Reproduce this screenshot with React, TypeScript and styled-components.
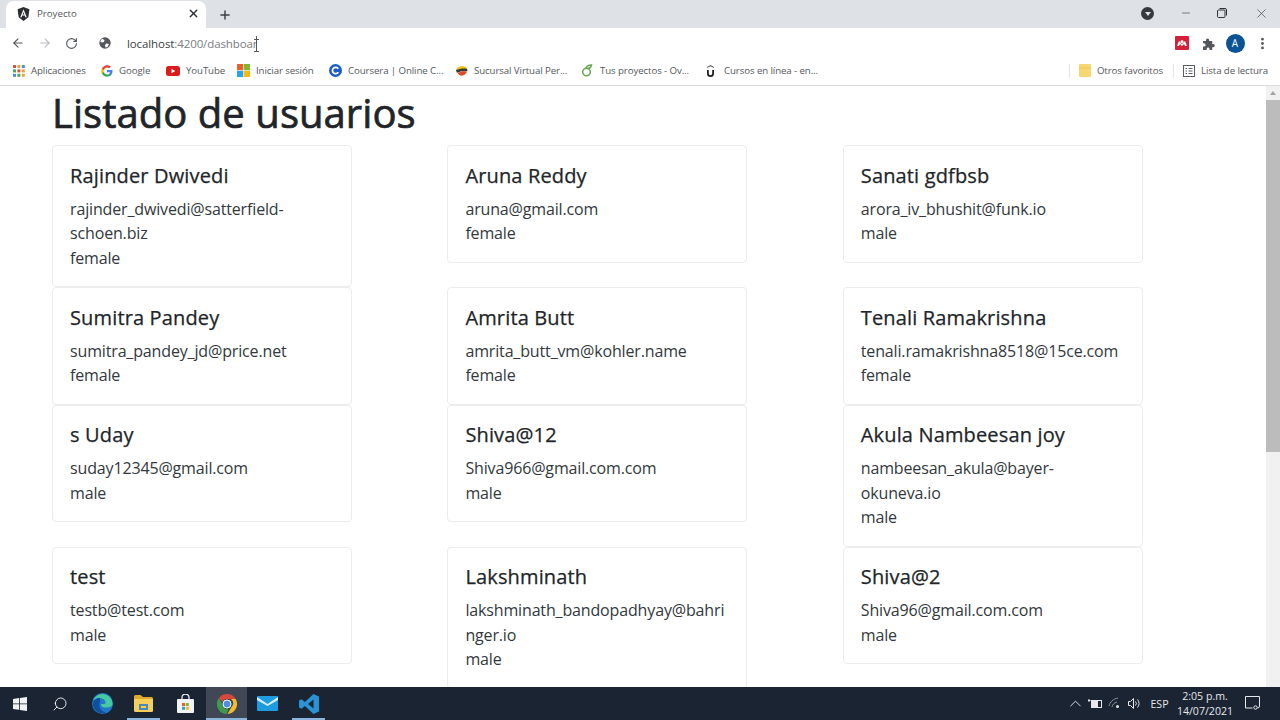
import React from "react";
import styled, { createGlobalStyle } from "styled-components";
import { ArrowLeft, ArrowRight, RotateCw, Plus, X, Minus, MoreVertical, ChevronUp, Search } from "lucide-react";

const Global = createGlobalStyle`
  html, body { margin: 0; padding: 0; height: 100%; background: #fff; }
  #root { height: 100%; }
  * { box-sizing: border-box; }
`;

const Shell = styled.div`
  width: 1280px; height: 720px; display: flex; flex-direction: column; overflow: hidden;
  font-family: "Open Sans", "Noto Sans", sans-serif; color: #212529; background: #fff;
`;
const TabStrip = styled.div`
  height: 28px; flex: none; background: #dee1e6; display: flex; align-items: flex-end; padding-left: 6px;
`;
const Tab = styled.div`
  width: 200px; height: 27px; background: #fff; border-radius: 8px 8px 0 0; display: flex; align-items: center;
  padding: 0 6px 2px 11px; font-size: 9.7px; color: #55585c;
`;
const TabTitle = styled.span` margin-left: 7px; flex: 1; `;
const NewTab = styled.div` margin: 0 0 6px 12px; display: flex; color: #3c4043; `;
const Spacer = styled.div` flex: 1; `;
const WindowControls = styled.div`
  display: flex; align-items: center; align-self: stretch; color: #2f3235; padding: 0 11px 2px 0;
`;
const ProfileDot = styled.div`
  width: 13px; height: 13px; border-radius: 50%; background: #36393d; margin-right: 24px; display: flex; align-items: center; justify-content: center;
  &::after { content: ""; border-left: 3.5px solid transparent; border-right: 3.5px solid transparent; border-top: 4.5px solid #dee1e6; margin-top: 1px; }
`;
const WinBtn = styled.div<{ $gap?: number }>` width: 16px; display: flex; justify-content: center; margin-right: ${p => p.$gap ?? 0}px; `;
const Toolbar = styled.div`
  height: 32px; flex: none; background: #fff; display: flex; align-items: center; padding: 0 5px 2px 11px; color: #5f6368;
`;
const NavIcon = styled.div<{ $w: number; $faded?: boolean }>` width: ${p => p.$w}px; display: flex; color: ${p => p.$faded ? "#b9bcc0" : "#54575b"}; `;
const Url = styled.div`
  font-size: 11.5px; color: #7a7d80; position: relative; margin-left: 12px; letter-spacing: -0.1px; flex: 1;
  b { font-weight: 400; color: #3d4043; }
`;
const Caret = styled.span`
  position: absolute; left: 129px; top: 0; width: 1px; height: 16px; background: #55585c;
  &::after { content: ""; position: absolute; left: -2px; top: 3px; width: 5px; height: 11px; border: 1px solid #55585c; border-width: 1px 0; }
`;
const ExtIcons = styled.div` display: flex; align-items: center; gap: 0; `;
const Ext = styled.div<{ $w: number }>` width: ${p => p.$w}px; display: flex; justify-content: center; align-items: center; `;
const Mendeley = styled.div`
  width: 14px; height: 14px; background: #d6203a; border-radius: 1px; display: flex; align-items: center; justify-content: center;
`;
const Avatar = styled.div`
  width: 19px; height: 19px; border-radius: 50%; background: #0b5394; color: #fff; font-size: 10px; display: flex; align-items: center; justify-content: center;
`;
const Bookmarks = styled.div`
  height: 26px; flex: none; background: #fff; border-bottom: 1px solid #dadce0; display: flex; align-items: center; padding: 0 12px 4px 13px;
  font-size: 9.7px; color: #55585c; letter-spacing: -0.1px;
`;
const Mark = styled.div<{ $w?: number }>`
  ${p => p.$w ? `width: ${p.$w}px;` : ""} display: flex; align-items: center; gap: 6px; white-space: nowrap; flex: none;
`;
const MarkSep = styled.div` width: 1px; height: 14px; background: #e3e5e8; margin: 0 9px 0 10px; `;
const Page = styled.div` flex: 1; min-height: 0; display: flex; overflow: hidden; `;
const Content = styled.main` flex: 1; min-width: 0; padding-left: 52px; overflow: hidden; `;
const Scrollbar = styled.div`
  width: 14px; flex: none; background: #f1f1f1; display: flex; flex-direction: column; align-items: center; padding-top: 5px;
  &::before { content: ""; border-left: 3.5px solid transparent; border-right: 3.5px solid transparent; border-bottom: 4px solid #a3a3a3; margin-bottom: 5px; }
`;
const Thumb = styled.div` width: 100%; height: 352px; background: #bcbcbc; `;
const Title = styled.h1`
  margin: 0 0 6px; height: 53px; font-size: 40px; line-height: 53px; font-weight: 400; letter-spacing: 0.05px; color: #212529;
  -webkit-text-stroke: 0.7px #212529;
`;
const Grid = styled.div`
  display: grid; grid-template-columns: repeat(3, 395.4px); align-items: start;
`;
const Card = styled.article`
  width: 300px; border: 1px solid #ebeced; border-radius: 4px; padding: 15.5px 16px 16px 17px; background: #fff;
`;
const Name = styled.h5`
  margin: 0 0 7px; font-size: 20px; line-height: 28px; font-weight: 400; color: #212529; letter-spacing: 0.15px;
  -webkit-text-stroke: 0.25px #212529;
`;
const Line = styled.div`
  font-size: 16px; line-height: 24.5px; color: #33383c; overflow-wrap: anywhere; letter-spacing: -0.15px;
`;
const Taskbar = styled.footer`
  height: 33px; flex: none; background: #1a2433; display: flex; align-items: stretch; color: #fff;
`;
const TaskIcon = styled.div<{ $w: number; $active?: boolean; $open?: boolean }>`
  width: ${p => p.$w}px; display: flex; align-items: center; justify-content: center; position: relative;
  background: ${p => p.$active ? "#3f4854" : "transparent"};
  ${p => p.$open ? `&::after { content: ""; position: absolute; left: ${p.$active ? 0 : 4}px; right: ${p.$active ? 0 : 4}px; bottom: 0; height: 2px; background: #8ab4dc; }` : ""}
`;
const Tray = styled.div` margin-left: auto; display: flex; align-items: center; color: #e6e8eb; font-size: 10.6px; `;
const TrayItem = styled.div<{ $w: number }>` width: ${p => p.$w}px; display: flex; align-items: center; justify-content: center; `;
const Clock = styled.div` width: 60px; text-align: center; font-size: 10.6px; line-height: 15px; `;

type U = { n: string; e: string; g: string };
const users: U[] = [
  { n: "Rajinder Dwivedi", e: "rajinder_dwivedi@satterfield-schoen.biz", g: "female" },
  { n: "Aruna Reddy", e: "aruna@gmail.com", g: "female" },
  { n: "Sanati gdfbsb", e: "arora_iv_bhushit@funk.io", g: "male" },
  { n: "Sumitra Pandey", e: "sumitra_pandey_jd@price.net", g: "female" },
  { n: "Amrita Butt", e: "amrita_butt_vm@kohler.name", g: "female" },
  { n: "Tenali Ramakrishna", e: "tenali.ramakrishna8518@15ce.com", g: "female" },
  { n: "s Uday", e: "suday12345@gmail.com", g: "male" },
  { n: "Shiva@12", e: "Shiva966@gmail.com.com", g: "male" },
  { n: "Akula Nambeesan joy", e: "nambeesan_akula@bayer-okuneva.io", g: "male" },
  { n: "test", e: "testb@test.com", g: "male" },
  { n: "Lakshminath", e: "lakshminath_bandopadhyay@bahringer.io", g: "male" },
  { n: "Shiva@2", e: "Shiva96@gmail.com.com", g: "male" },
];

const Angular = () => (
  <svg width="13" height="14" viewBox="0 0 24 26">
    <path d="M12 0 1 4l2 15 9 7 9-7 2-15z" fill="#2b2d30" />
    <path d="M12 4 6 19h2.5l1.2-3h4.6l1.2 3H18zm-1.5 10L12 9.5l1.5 4.5z" fill="#fff" />
  </svg>
);
const Apps = () => (
  <svg width="12" height="12" viewBox="0 0 12 12">
    {[0, 1, 2].flatMap(r => [0, 1, 2].map(c => (
      <rect key={`${r}${c}`} x={c * 4.4} y={r * 4.4} width="3" height="3" fill={["#d9503f", "#e8a33a", "#4d8fe0", "#4aa564", "#d9503f", "#e8a33a", "#4d8fe0", "#4aa564", "#e8a33a"][r * 3 + c]} />
    )))}
  </svg>
);
const GoogleG = () => (
  <svg width="12" height="12" viewBox="0 0 24 24">
    <path d="M23 12.3c0-.8-.1-1.600-.2-2.300H12v4.400h6.200c-.3 1.400-1.100 2.600-2.300 3.400v2.800h3.700c2.200-2 3.400-5 3.400-8.300z" fill="#4285f4" />
    <path d="M12 23.500c3.100 0 5.700-1 7.600-2.800l-3.700-2.900c-1 .7-2.300 1.100-3.900 1.100-3 0-5.500-2-6.400-4.700H1.800v2.900c1.900 3.800 5.800 6.400 10.200 6.400z" fill="#34a853" />
    <path d="M5.600 14.200c-.5-1.400-.5-3 0-4.400V6.900H1.800c-1.600 3.100-1.600 7 0 10.200z" fill="#fbbc05" />
    <path d="M12 5c1.700 0 3.200.6 4.400 1.700l3.300-3.300C17.700 1.600 15 .5 12 .5 7.600.5 3.700 3.100 1.800 6.900l3.800 2.900C6.500 7 9 5 12 5z" fill="#ea4335" />
  </svg>
);
const YouTube = () => (
  <svg width="14" height="10" viewBox="0 0 14 10">
    <rect width="14" height="10" rx="2.500" fill="#dc1b1b" />
    <path d="M5.500 2.800v4.400L9.300 5z" fill="#fff" />
  </svg>
);
const Microsoft = () => (
  <svg width="13" height="13" viewBox="0 0 13 13">
    <rect width="6.200" height="6.200" fill="#e8612c" />
    <rect x="6.800" width="6.200" height="6.200" fill="#7fba2a" />
    <rect y="6.800" width="6.200" height="6.200" fill="#27a4e8" />
    <rect x="6.800" y="6.800" width="6.200" height="6.200" fill="#fbb80f" />
  </svg>
);
const Coursera = () => (
  <svg width="13" height="13" viewBox="0 0 13 13">
    <circle cx="6.500" cy="6.500" r="6.500" fill="#1c5cc4" />
    <path d="M9.300 8.300a3.200 3.200 0 1 1 0-3.600" fill="none" stroke="#fff" strokeWidth="1.800" />
  </svg>
);
const Sucursal = () => (
  <svg width="13" height="12" viewBox="0 0 14 12">
    <path d="M1 5c1-3 4-4.500 7-4.500 2 0 4 1 5 3z" fill="#f2c51d" />
    <path d="M1 5c3-1.500 8-2 12-1.500l.5 2.500C9 5.500 5 6.500 2 8z" fill="#3a3a32" />
    <path d="M3 8c3-1.500 6-2 10-1.500C12 9.500 9 11 6.500 11 5 11 3.500 10 3 8z" fill="#df4a2a" />
  </svg>
);
const Sprout = () => (
  <svg width="13" height="13" viewBox="0 0 13 13" fill="none" stroke="#69a84f" strokeWidth="1.500">
    <circle cx="5.500" cy="8" r="3.800" />
    <path d="M5 4.200C5.500 2.200 7.500 1 10.500 1 10 3 8.500 4.500 6.500 4.800" />
  </svg>
);
const Udemy = () => (
  <svg width="13" height="12" viewBox="0 0 13 12">
    <path d="M5.500 0 9 2v1L5.500 1.200 2 3V2z" fill="#55585c" />
    <path d="M2 5v3.500a3.500 3.500 0 0 0 7 0V5H7.200v3.500a1.700 1.700 0 0 1-3.400 0V5z" fill="#202124" />
  </svg>
);
const Folder = () => (
  <svg width="12" height="13" viewBox="0 0 12 13"><path d="M1 0h10a1 1 0 0 1 1 1v11a1 1 0 0 1-1 1H1a1 1 0 0 1-1-1V1a1 1 0 0 1 1-1z" fill="#f7d774" /><rect y="3.500" width="12" height="1" fill="#f2c94f" /></svg>
);
const ReadingList = () => (
  <svg width="12" height="12" viewBox="0 0 12 12" fill="none" stroke="#5a5d61">
    <rect x=".5" y=".5" width="11" height="11" />
    <path d="M2.500 3.500h1.500M5.500 3.500H9.500M2.500 6h1.500M5.500 6H9.500M2.500 8.500h1.500M5.500 8.500H9.500" />
  </svg>
);
const Globe = () => (
  <svg width="12" height="12" viewBox="0 0 12 12">
    <circle cx="6" cy="6" r="5.700" fill="#54575b" />
    <path d="M3 1.800 5.500 3 5 5 3 5.500 1.200 4.500zM7 6.500l3 .5-1.500 3-2 .5L6 8.500z" fill="#fff" />
  </svg>
);
const Puzzle = () => (
  <svg width="13" height="13" viewBox="0 0 13 13">
    <path d="M1 4h3V3a1.600 1.600 0 0 1 3.200 0v1h3v3h1a1.600 1.600 0 0 1 0 3.200h-1V13H7.500v-1a1.400 1.400 0 0 0-2.800 0v1H1V9.500h1a1.600 1.600 0 0 0 0-3.200H1z" fill="#54575b" />
  </svg>
);
const RestoreIcon = () => (
  <svg width="10" height="10" viewBox="0 0 10 10" fill="none" stroke="#2f3235">
    <rect x=".5" y="2" width="7.500" height="7.500" rx="1" />
    <path d="M2.500 .5H8a1.500 1.500 0 0 1 1.500 1.500V7.500" />
  </svg>
);
const WinLogo = () => (
  <svg width="14" height="14" viewBox="0 0 14 14" fill="#f1f2f4">
    <path d="M0 2 6 1.100V6.500H0zM6.800 1 14 0V6.500H6.800zM0 7.300H6V12.800L0 12zM6.800 7.300H14V14L6.800 13z" />
  </svg>
);
const Edge = () => (
  <svg width="21" height="21" viewBox="0 0 21 21">
    <circle cx="10.500" cy="10.500" r="10.500" fill="#1f78c8" />
    <path d="M20.500 12C21 6 16.500 1 10.500 1 6 1 2.500 4 1 7.500 4 4.500 9 4 12 6.500c1.500 1.200 2 3 1 4.500h-4c0 3 3 4 6 3.500 2.500-.3 4.500-1 5.500-2.500z" fill="#46c9a0" />
    <path d="M8 9c-2 3 0 9 6 10.500-6 2.500-13-2-13-8.500C1 7 5 4.500 8 5z" fill="#0f4f9e" />
  </svg>
);
const Explorer = () => (
  <svg width="19" height="17" viewBox="0 0 19 17">
    <path d="M0 1.500A1.500 1.500 0 0 1 1.500 0h5L9 2h8.500A1.500 1.500 0 0 1 19 3.500V6H0z" fill="#e0a92b" />
    <path d="M0 4h19v11.500a1.500 1.500 0 0 1-1.500 1.500h-16A1.500 1.500 0 0 1 0 15.500z" fill="#f5ce5c" />
    <rect x="5" y="9" width="9" height="6" fill="#4a8bb5" />
    <rect x="7" y="11" width="5" height="2" fill="#f5ce5c" />
  </svg>
);
const Store = () => (
  <svg width="17" height="19" viewBox="0 0 17 19">
    <path d="M5 6V3.500a3.500 3.500 0 0 1 7 0V6" fill="none" stroke="#e8eaec" strokeWidth="1.300" />
    <rect y="5" width="17" height="14" rx="1" fill="#f2f3f5" />
    <rect x="5" y="9" width="3" height="3" fill="#e8612c" />
    <rect x="8.800" y="9" width="3" height="3" fill="#7fba2a" />
    <rect x="5" y="12.800" width="3" height="3" fill="#27a4e8" />
    <rect x="8.800" y="12.800" width="3" height="3" fill="#fbb80f" />
  </svg>
);
const Chrome = () => (
  <svg width="20" height="20" viewBox="0 0 20 20">
    <path d="M10 0a10 10 0 0 1 8.700 5H10a5 5 0 0 0-4.700 3.300L1.900 4A10 10 0 0 1 10 0z" fill="#d8473c" />
    <path d="M18.700 5A10 10 0 0 1 10.500 20l4-7a5 5 0 0 0-.5-8z" fill="#f2bd2b" />
    <path d="M1.900 4 5.800 11a5 5 0 0 0 5.500 3.900L9.500 20A10 10 0 0 1 1.900 4z" fill="#3d9c52" />
    <circle cx="10" cy="10" r="4" fill="#4b8cee" stroke="#fff" strokeWidth="1" />
  </svg>
);
const Mail = () => (
  <svg width="21" height="15" viewBox="0 0 21 15">
    <rect width="21" height="15" rx="1" fill="#1e9ce0" />
    <path d="M0 1l10.500 7L21 1v3l-10.500 6L0 4z" fill="#d7effa" />
  </svg>
);
const VSCode = () => (
  <svg width="20" height="20" viewBox="0 0 20 20">
    <path d="M14.500 0 20 2.500v15L14.500 20 6 12l-3.500 2.700L0 13.500v-7l2.500-1.200L6 8zM14.500 5.500 9 10l5.500 4.500z" fill="#2a93d6" />
  </svg>
);
const Battery = () => (
  <svg width="15" height="9" viewBox="0 0 15 9" fill="none" stroke="#e6e8eb">
    <rect x="3.500" y="1.500" width="10" height="7" />
    <rect x="4" y="2" width="6" height="6" fill="#e6e8eb" stroke="none" />
    <path d="M0 1.500h2.500M1 0v3" />
  </svg>
);
const Wifi = () => (
  <svg width="14" height="13" viewBox="0 0 14 13" fill="none" stroke="#8b929b">
    <path d="M1 9C2 5 5 2 10 1M4 10c.5-2.500 2-4 5-5" />
    <circle cx="9.500" cy="9.500" r="1.500" fill="#e6e8eb" stroke="none" />
  </svg>
);
const Volume = () => (
  <svg width="13" height="13" viewBox="0 0 13 13" fill="none" stroke="#e6e8eb">
    <path d="M.5 4.500h2L5.500 1.500v10l-3-3h-2zM7.500 4.500a3 3 0 0 1 0 4M9.500 2.500a6 6 0 0 1 0 8" />
  </svg>
);
const Notif = () => (
  <svg width="15" height="15" viewBox="0 0 15 15" fill="none" stroke="#e6e8eb">
    <path d="M.5.500h14v9.500a2 2 0 0 1-2 2M.5.500v11.500h7" />
    <circle cx="10.500" cy="11.500" r="1.700" />
  </svg>
);

const marks: [number, React.ReactNode, string][] = [
  [88, <Apps />, "Aplicaciones"],
  [65, <GoogleG />, "Google"],
  [71, <YouTube />, "YouTube"],
  [92, <Microsoft />, "Iniciar sesión"],
  [126, <Coursera />, "Coursera | Online C..."],
  [126, <Sucursal />, "Sucursal Virtual Per..."],
  [124, <Sprout />, "Tus proyectos - Ov..."],
  [120, <Udemy />, "Cursos en línea - en..."],
];

export default function App() {
  return (
    <Shell>
      <Global />
      <TabStrip>
        <Tab>
          <Angular />
          <TabTitle>Proyecto</TabTitle>
          <X size={13} color="#2b2d30" strokeWidth={2.500} />
        </Tab>
        <NewTab><Plus size={14} strokeWidth={2.500} /></NewTab>
        <Spacer />
        <WindowControls>
          <ProfileDot />
          <WinBtn $gap={20}><Minus size={12} strokeWidth={1.200} /></WinBtn>
          <WinBtn $gap={23}><RestoreIcon /></WinBtn>
          <WinBtn><X size={15} strokeWidth={1} /></WinBtn>
        </WindowControls>
      </TabStrip>
      <Toolbar>
        <NavIcon $w={27}><ArrowLeft size={14} strokeWidth={2} /></NavIcon>
        <NavIcon $w={27} $faded><ArrowRight size={14} strokeWidth={2} /></NavIcon>
        <NavIcon $w={34}><RotateCw size={13} strokeWidth={2} /></NavIcon>
        <NavIcon $w={16}><Globe /></NavIcon>
        <Url>
          <b>localhost</b>:4200/dashboar
          <Caret />
        </Url>
        <ExtIcons>
          <Ext $w={26}><Mendeley>
            <svg width="10" height="6" viewBox="0 0 10 6" fill="#fff"><circle cx="5" cy="1.500" r="1.500" /><path d="M0 6l2-5 3 3 3-3 2 5H8L7 4 5 6 3 4 2 6z" /></svg>
          </Mendeley></Ext>
          <Ext $w={26}><Puzzle /></Ext>
          <Ext $w={28}><Avatar>A</Avatar></Ext>
          <Ext $w={26}><MoreVertical size={15} color="#54575b" strokeWidth={2.500} /></Ext>
        </ExtIcons>
      </Toolbar>
      <Bookmarks>
        {marks.map(([w, icon, t]) => (
          <Mark key={t} $w={w}>{icon}<span>{t}</span></Mark>
        ))}
        <Spacer />
        <MarkSep />
        <Mark><Folder /><span>Otros favoritos</span></Mark>
        <MarkSep />
        <Mark><ReadingList /><span>Lista de lectura</span></Mark>
      </Bookmarks>
      <Page>
        <Content>
          <Title>Listado de usuarios</Title>
          <Grid>
            {users.map(u => (
              <Card key={u.n}>
                <Name>{u.n}</Name>
                <Line>{u.e}</Line>
                <Line>{u.g}</Line>
              </Card>
            ))}
          </Grid>
        </Content>
        <Scrollbar><Thumb /></Scrollbar>
      </Page>
      <Taskbar>
        <TaskIcon $w={39}><WinLogo /></TaskIcon>
        <TaskIcon $w={42}><Search size={16} strokeWidth={1.300} style={{ transform: "scaleX(-1)" }} /></TaskIcon>
        <TaskIcon $w={42}><Edge /></TaskIcon>
        <TaskIcon $w={41} $open><Explorer /></TaskIcon>
        <TaskIcon $w={42}><Store /></TaskIcon>
        <TaskIcon $w={41} $active $open><Chrome /></TaskIcon>
        <TaskIcon $w={41}><Mail /></TaskIcon>
        <TaskIcon $w={41} $open><VSCode /></TaskIcon>
        <Tray>
          <TrayItem $w={20}><ChevronUp size={19} strokeWidth={1.200} /></TrayItem>
          <TrayItem $w={20}><Battery /></TrayItem>
          <TrayItem $w={20}><Wifi /></TrayItem>
          <TrayItem $w={19}><Volume /></TrayItem>
          <TrayItem $w={31}>ESP</TrayItem>
          <Clock>2:05 p.m.<br />14/07/2021</Clock>
          <TrayItem $w={35}><Notif /></TrayItem>
          <TrayItem $w={10} />
        </Tray>
      </Taskbar>
    </Shell>
  );
}
